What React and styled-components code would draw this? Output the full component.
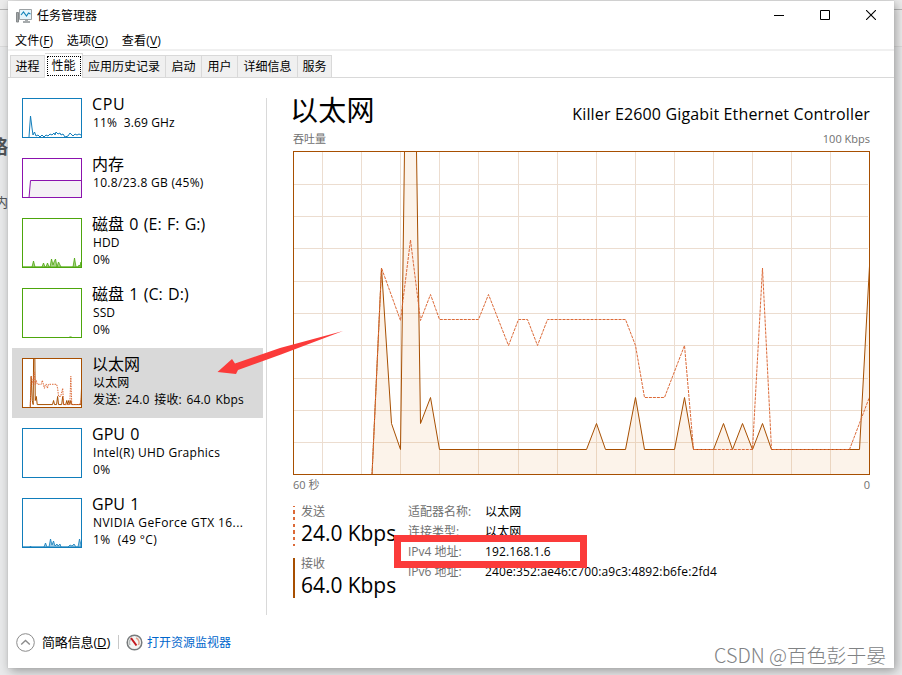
import React from 'react';
import styled, { createGlobalStyle } from 'styled-components';

const cpuPoints = '7,39 8.5,18 10,30 11,37 12.5,34 14,38 16,37 18,39 20,37 22,39 24,37 26,38 28,36 30,37 32,35 33,37 34,34 36,36 38,35 39,37 41,36 43,39 46,38 48,35 50,37 51,38 53,36 55,37 57,36 59,37';
const diskPoints = '1,49 10,49 11.5,43 13,49 20,49 21.5,45 23,49 24,49 25.5,45 27,49 28,49 29.5,41 31,47 32,44 33.5,41 35,49 36.5,44 39,49 51,49 52.5,40 54,49 56,49 57,47 58,48 59,44 59,49';
const gpuPoints = '1,49 8,49 8.5,48 9,49 22,49 23.5,45 25,49 27,49 28.5,41 30,47 31.5,43 33,48 35,46 36,48 38,46 39,49 46,49 48,47 50,48 52,46 54,49 56,49 57.5,41 59,47 59,49';

const receivePoints = [
  [79, 324], [88.5, 117], [98.5, 272.5], [107.5, 298.5], [111.5, 0], [123.5, 0], [127.5, 272.5],
  [137.5, 246.5], [146.5, 298.5], [293.5, 298.5], [303.5, 272.5], [312.5, 298.5], [332.5, 298.5],
  [342.5, 246.5], [351.5, 298.5], [381.5, 298.5], [391.5, 246.5], [400.5, 298.5], [420.5, 298.5],
  [430.5, 272.5], [439.5, 298.5], [449.5, 272.5], [459.5, 298.5], [469.5, 272.5], [478.5, 298.5],
  [566.5, 298.5], [576.5, 115],
];

const sendPoints = [
  [79, 324], [88.5, 117], [107.5, 169.5], [117.5, 89], [127.5, 169.5], [137.5, 143.5], [146.5, 168.5],
  [185.5, 168.5], [195.5, 143.5], [215.5, 194.5], [225.5, 168.5], [234.5, 168.5], [244.5, 194.5],
  [254.5, 168.5], [332.5, 168.5], [342.5, 194.5], [351.5, 246.5], [371.5, 246.5], [391.5, 194.5],
  [400.5, 298.5], [459.5, 298.5], [469.5, 117], [478.5, 298.5], [556.5, 298.5], [576.5, 246],
];

const gridX = [29, 68, 107, 146, 185, 225, 264, 303, 342, 381, 420, 459, 498, 537];
const gridY = [33, 65, 97, 130, 162, 194, 227, 259, 291];

const toPoints = (list, sx = 1, sy = 1) => list.map(([x, y]) => `${x * sx},${y * sy}`).join(' ');

const devices = [
  { title: 'CPU', lines: ['11%  3.69 GHz'], color: '#117dbb', kind: 'cpu', height: 40, spacing: 0.15, titleSpacing: 0.7 },
  { title: '内存', lines: ['10.8/23.8 GB (45%)'], color: '#8b12ae', kind: 'memory', height: 40, spacing: 0.3 },
  { title: '磁盘 0 (E: F: G:)', lines: ['HDD', '0%'], color: '#4da60c', kind: 'disk', height: 50, spacing: 0.1 },
  { title: '磁盘 1 (C: D:)', lines: ['SSD', '0%'], color: '#4da60c', kind: 'idle', height: 50, spacing: 0.1 },
  { title: '以太网', lines: ['以太网', '发送: 24.0 接收: 64.0 Kbps'], color: '#a74f01', kind: 'network', height: 50, spacing: 0.13, wordSpacing: 1.5, active: true },
  { title: 'GPU 0', lines: ['Intel(R) UHD Graphics', '0%'], color: '#117dbb', kind: 'none', height: 50, spacing: 0.28 },
  { title: 'GPU 1', lines: ['NVIDIA GeForce GTX 16...', '1%  (49 °C)'], color: '#117dbb', kind: 'gpu', height: 50, spacing: 0.42 },
];

const tabs = [
  { label: '进程', width: 35 },
  { label: '性能', width: 38, active: true },
  { label: '应用历史记录', width: 83 },
  { label: '启动', width: 36 },
  { label: '用户', width: 36 },
  { label: '详细信息', width: 60 },
  { label: '服务', width: 34 },
];

const details = [
  ['适配器名称:', '以太网'],
  ['连接类型:', '以太网'],
  ['IPv4 地址:', '192.168.1.6'],
  ['IPv6 地址:', '240e:352:ae46:c700:a9c3:4892:b6fe:2fd4'],
];

const DeviceGraph = ({ kind, color, height }) => (
  <svg width="60" height={height} fill="none">
    <rect width="60" height={height} fill="#fff" />
    {kind === 'cpu' && <polyline points={cpuPoints} stroke={color} />}
    {kind === 'memory' && <path d="M7 40L8.5 22.5H59.5V40Z" fill="#f4f0f5" stroke={color} />}
    {kind === 'disk' && <polygon points={diskPoints} fill={color} fillOpacity=".5" stroke={color} strokeWidth=".8" />}
    {kind === 'idle' && <path d="M47.5 49L48.5 48L49.5 49" stroke={color} strokeWidth=".6" />}
    {kind === 'gpu' && <polygon points={gpuPoints} fill={color} fillOpacity=".4" stroke={color} strokeWidth=".8" />}
    {kind === 'network' && (
      <>
        <polyline points={toPoints(receivePoints, 0.104, 0.156)} stroke={color} />
        <polyline points={toPoints(sendPoints, 0.104, 0.156)} stroke="#dc6a38" strokeDasharray="1.5 1" />
      </>
    )}
    <rect x=".5" y=".5" width="59" height={height - 1} stroke={color} />
  </svg>
);

const ThroughputChart = () => (
  <ChartSvg width="577" height="324" fill="none">
    {gridX.map(x => <path key={x} d={`M${x + 0.5} 0V324`} stroke="#ecddd0" />)}
    {gridY.map(y => <path key={y} d={`M0 ${y + 0.5}H575`} stroke="#ecddd0" />)}
    <polygon points={`${toPoints(receivePoints)} 576.5,324`} fill="#e79a53" fillOpacity=".12" />
    <polyline points={toPoints(receivePoints)} stroke="#a74f01" />
    <polyline points={toPoints(sendPoints)} stroke="#dc6a38" strokeDasharray="3 1" />
    <rect x=".5" y=".5" width="576" height="323" stroke="#a74f01" />
  </ChartSvg>
);

const AppIcon = () => (
  <svg width="17" height="15" fill="none">
    <path d="M.5 4.5H2.5V14H.5Z" fill="#a2a6a8" stroke="#85898b" />
    <path d="M3.5 1.5H15.5V11.5H3.5Z" fill="#e6f4fb" stroke="#9ca1a4" />
    <path d="M5 7L7.5 4L10.5 8L12.500 5L14.5 6" stroke="#1383b9" strokeWidth="1.1" />
    <path d="M9 12H12V13H14V15H7V13H9Z" fill="#a7abad" />
  </svg>
);

const GaugeIcon = () => (
  <svg width="17" height="17" fill="none">
    <circle cx="8.5" cy="8.5" r="7.3" fill="#f4f4f2" stroke="#777b7d" strokeWidth="1.5" />
    <path d="M4 11A5 5 0 0 1 5 5" stroke="#b7bcbc" strokeWidth="1.5" />
    <path d="M10 4A5 5 0 0 1 12.5 11" stroke="#e2a28b" strokeWidth="1.5" />
    <path d="M5 4L10.5 11.5" stroke="#c4161c" strokeWidth="2" />
  </svg>
);

const App = () => (
  <>
    <GlobalStyle />
    <Desktop>
      <Backdrop>
        <BackdropBand $height={9} $color="#ececec" />
        <BackdropBand $height={1} $color="#b5b5b5" />
        <BackdropBand $height={36} $color="#eeeeee" />
        <BackdropBand $height={1} $color="#dcdcdc" />
        <BackdropBand $height={628} $color="#e9eaeb" />
        <BackdropText $top={138} $size={19} $bold>略</BackdropText>
        <BackdropText $top={196} $size={13}>内</BackdropText>
      </Backdrop>
      <Window>
        <TitleBar>
          <AppIcon />
          <WindowTitle>任务管理器</WindowTitle>
          <WindowButtons>
            <svg width="10" height="10"><path d="M0 5.5H10" stroke="#000" /></svg>
            <svg width="10" height="10" fill="none"><path d="M.5 .5H9.5V9.5H.5Z" stroke="#000" /></svg>
            <svg width="10" height="10"><path d="M0 0L10 10M10 0L0 10" stroke="#000" strokeWidth="1.1" /></svg>
          </WindowButtons>
        </TitleBar>
        <Menu>
          <MenuItem>文件(<u>F</u>)</MenuItem>
          <MenuItem>选项(<u>O</u>)</MenuItem>
          <MenuItem>查看(<u>V</u>)</MenuItem>
        </Menu>
        <TabBar>
          {tabs.map(({ label, width, active }) => (
            <Tab key={label} $width={width} $active={active}>
              {active ? <FocusRing>{label}</FocusRing> : label}
            </Tab>
          ))}
        </TabBar>
        <Content>
          <Sidebar>
            {devices.map(({ title, lines, active, spacing, wordSpacing, titleSpacing, ...graph }) => (
              <Device key={title} $active={active} $height={graph.height + 20}>
                <DeviceGraph {...graph} />
                <DeviceText>
                  <DeviceTitle $spacing={titleSpacing}>{title}</DeviceTitle>
                  {lines.map(line => (
                    <DeviceLine key={line} $spacing={spacing} $wordSpacing={wordSpacing}>{line}</DeviceLine>
                  ))}
                </DeviceText>
              </Device>
            ))}
          </Sidebar>
          <Main>
            <Header>
              <Heading>以太网</Heading>
              <Adapter>Killer E2600 Gigabit Ethernet Controller</Adapter>
            </Header>
            <Caption $height={23}><span>吞吐量</span><span>100 Kbps</span></Caption>
            <ThroughputChart />
            <Caption $height={21}><span>60 秒</span><span>0</span></Caption>
            <Stats>
              <Rates>
                <Rate $dashed>
                  <RateLabel>发送</RateLabel>
                  <RateValue>24.0 Kbps</RateValue>
                </Rate>
                <Rate>
                  <RateLabel>接收</RateLabel>
                  <RateValue>64.0 Kbps</RateValue>
                </Rate>
              </Rates>
              <Details>
                {details.map(([name, value]) => (
                  <React.Fragment key={name}>
                    <dt>{name}</dt>
                    <dd>{value}</dd>
                  </React.Fragment>
                ))}
              </Details>
            </Stats>
          </Main>
        </Content>
        <Footer>
          <svg width="19" height="19" fill="none">
            <circle cx="9.5" cy="9.5" r="8.8" stroke="#8b8b8b" />
            <path d="M5.2 11.5L9.5 7.5L13.8 11.5" stroke="#8b8b8b" strokeWidth="1.4" />
          </svg>
          <FewerDetails>简略信息(<u>D</u>)</FewerDetails>
          <FooterDivider />
          <GaugeIcon />
          <MonitorLink>打开资源监视器</MonitorLink>
        </Footer>
      </Window>
      <Highlight />
      <Arrow width="128" height="46">
        <path d="M126 1L63 18L18 33.5L15 29L.500 42L19 44L21 40L64 24.5Z" fill="#fb3b3a" />
      </Arrow>
      <Watermark>CSDN @百色彭于晏</Watermark>
    </Desktop>
  </>
);

const GlobalStyle = createGlobalStyle`
  * {
    box-sizing: border-box;
  }

  body {
    margin: 0;
    overflow: hidden;
    font-family: 'Open Sans', 'Noto Sans CJK SC', sans-serif;
    font-size: 12px;
    color: #000;
  }

  svg {
    display: block;
    flex: none;
  }
`;

const Desktop = styled.div`
  position: relative;
  width: 902px;
  height: 675px;
  padding: 1px 8px 7px;
  overflow: hidden;
`;

const Backdrop = styled.div`
  position: absolute;
  inset: 0;
`;

const BackdropBand = styled.div`
  height: ${({ $height }) => $height}px;
  background: ${({ $color }) => $color};
`;

const BackdropText = styled.span`
  position: absolute;
  top: ${({ $top }) => $top}px;
  right: calc(100% - 8px);
  font-size: ${({ $size }) => $size}px;
  font-weight: ${({ $bold }) => ($bold ? 700 : 400)};
  line-height: 1;
  color: #505458;
`;

const Window = styled.div`
  position: relative;
  display: flex;
  flex-direction: column;
  width: 886px;
  height: 667px;
  background: #fff;
  box-shadow: 0 0 1px #b0b0b0, 2px 3px 10px rgba(0, 0, 0, 0.34);
`;

const TitleBar = styled.div`
  display: flex;
  align-items: center;
  height: 29px;
  padding: 0 18px 0 8px;
`;

const WindowTitle = styled.span`
  margin: -2px 0 0 4px;
`;

const WindowButtons = styled.div`
  display: flex;
  gap: 36px;
  margin-left: auto;
  padding-bottom: 1px;
`;

const Menu = styled.div`
  display: flex;
  gap: 13.5px;
  align-items: center;
  height: 21px;
  padding: 3px 0 0 7px;
  border-bottom: 2px solid #f0f0f0;
`;

const MenuItem = styled.span`
  line-height: 18px;
  letter-spacing: 0.2px;

  u {
    text-underline-offset: 2px;
  }
`;

const TabBar = styled.div`
  display: flex;
  align-items: flex-end;
  height: 27px;
  padding-left: 2px;
  border-bottom: 1px solid #d9d9d9;
`;

const Tab = styled.div`
  display: flex;
  align-items: center;
  justify-content: center;
  width: ${({ $width }) => $width}px;
  height: ${({ $active }) => ($active ? 25 : 22)}px;
  margin-bottom: ${({ $active }) => ($active ? -1 : 0)}px;
  padding-bottom: ${({ $active }) => ($active ? 0 : 2)}px;
  background: ${({ $active }) => ($active ? '#fff' : '#f0f0f0')};
  border: 1px solid #d9d9d9;
  border-bottom: 0;
  white-space: nowrap;

  & + & {
    border-left: 0;
  }
`;

const FocusRing = styled.span`
  width: 34px;
  height: 20px;
  border: 1px dotted #000;
  line-height: 17px;
  text-align: center;
`;

const Content = styled.div`
  display: flex;
  height: 537px;
`;

const Sidebar = styled.div`
  width: 259px;
  margin-top: 20px;
  padding: 0 3px 0 4px;
  border-right: 1px solid #d9d9d9;
`;

const Device = styled.div`
  display: flex;
  width: 251px;
  height: ${({ $height }) => $height}px;
  padding: 10px 0 0 10px;
  background: ${({ $active }) => ($active ? '#d9d9d9' : 'transparent')};

  &:first-child {
    margin-top: -10px;
  }
`;

const DeviceText = styled.div`
  margin: -4px 0 0 10px;
  white-space: pre;
`;

const DeviceTitle = styled.div`
  font-size: 16px;
  line-height: 20px;
  letter-spacing: ${({ $spacing = 0.05 }) => $spacing}px;
  word-spacing: 1px;
`;

const DeviceLine = styled.div`
  padding-left: 1px;
  line-height: 17px;
  letter-spacing: ${({ $spacing }) => $spacing}px;
  word-spacing: ${({ $wordSpacing = 0 }) => $wordSpacing}px;
`;

const Main = styled.div`
  width: 603px;
  padding: 10px 0 0 26px;
`;

const Header = styled.div`
  display: flex;
  align-items: center;
  justify-content: space-between;
  height: 40px;
`;

const Heading = styled.h1`
  margin: 3px 0 0 -3px;
  font-size: 28px;
  font-weight: 400;
  line-height: 40px;
  letter-spacing: 0.3px;
`;

const Adapter = styled.span`
  padding-top: 11px;
  font-size: 16px;
  letter-spacing: 0.15px;
`;

const Caption = styled.div`
  display: flex;
  align-items: center;
  justify-content: space-between;
  height: ${({ $height }) => $height}px;
  padding-bottom: 1px;
  font-size: 11px;
  line-height: 16px;
  color: #707070;
`;

const ChartSvg = styled.svg`
  background: #fff;
`;

const Stats = styled.div`
  display: flex;
  margin-top: 6px;
`;

const Rates = styled.div`
  display: flex;
  flex-direction: column;
  gap: 12px;
  margin-top: 4px;
  width: 115px;
`;

const Rate = styled.div`
  height: 40px;
  padding-left: 6px;
  border-left: 2px solid #a74f01;
  border-image: ${({ $dashed }) => ($dashed
    ? 'repeating-linear-gradient(#dc6a38 0 3px, #fff 3px 6px) 2'
    : 'none')};
  white-space: nowrap;
`;

const RateLabel = styled.div`
  line-height: 12px;
  color: #707070;
`;

const RateValue = styled.div`
  margin-top: 2px;
  font-size: 21px;
  line-height: 27px;
  letter-spacing: -0.05px;
`;

const Details = styled.dl`
  display: grid;
  grid-template-columns: 77px auto;
  grid-auto-rows: 20px;
  margin: 0;
  line-height: 20px;
  white-space: nowrap;

  dt {
    color: #707070;
  }

  dd {
    margin: 0;
    letter-spacing: 0.13px;
  }
`;

const Footer = styled.div`
  display: flex;
  align-items: center;
  height: 53px;
  padding: 1px 0 0 8px;
`;

const FewerDetails = styled.span`
  margin: -2px 0 0 7px;
  font-size: 13px;
  letter-spacing: -0.15px;
`;

const FooterDivider = styled.div`
  width: 1px;
  height: 14px;
  margin: 0 7px 0 8px;
  background: #c8c8c8;
`;

const MonitorLink = styled.a`
  margin-left: 4px;
  color: #0066cc;
`;

const Highlight = styled.div`
  position: absolute;
  top: 535px;
  left: 394px;
  width: 193px;
  height: 33px;
  border: 7px solid #fb3b3a;
`;

const Arrow = styled.svg`
  position: absolute;
  top: 330px;
  left: 217px;
`;

const Watermark = styled.div`
  position: absolute;
  top: 641px;
  left: 714px;
  font-family: 'Noto Sans CJK SC', sans-serif;
  font-size: 19.8px;
  font-weight: 300;
  line-height: 27px;
  color: #808284;
  white-space: nowrap;
`;

export default App;
